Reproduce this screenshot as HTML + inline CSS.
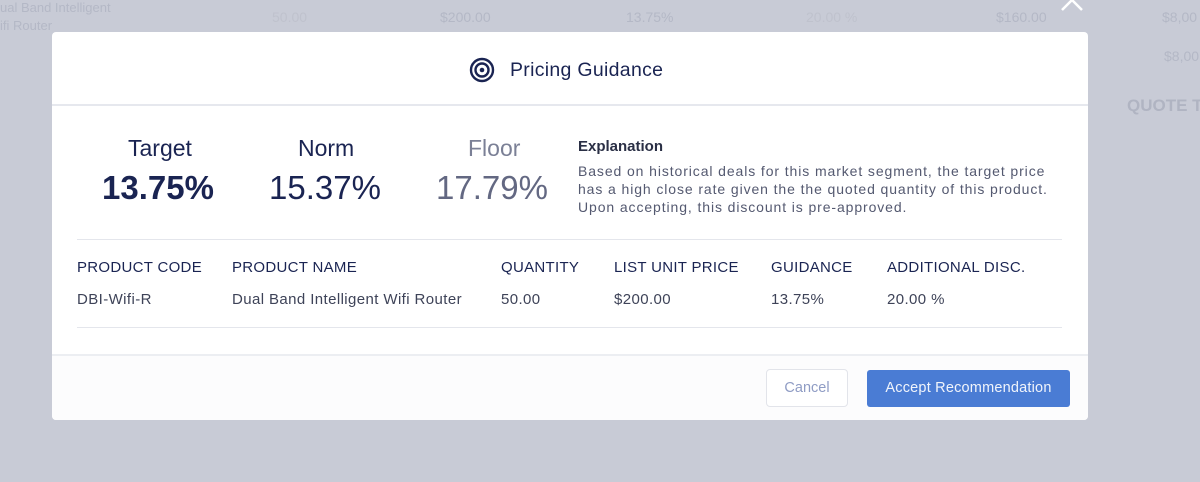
<!DOCTYPE html>
<html><head><meta charset="utf-8"><style>
*{margin:0;padding:0;box-sizing:border-box}
body{width:1200px;height:482px;background:#c8cbd6;font-family:"Liberation Sans",sans-serif;position:relative;overflow:hidden}
.a{position:absolute;white-space:nowrap}
.bg{color:#b4b8c6;font-size:14px}
.modal{position:absolute;left:52px;top:32px;width:1036px;height:388px;background:#fff;border-radius:4px;overflow:hidden}
.hd{color:#1a2452;font-size:15px;letter-spacing:0.3px}
.td{color:#3e4358;font-size:15px;letter-spacing:0.4px}
</style></head><body>
<div class="a bg" style="left:0;top:0;font-size:13px">ual Band Intelligent</div>
<div class="a bg" style="left:0;top:18px;font-size:13px">ifi Router</div>
<div class="a bg" style="left:272px;top:9px;color:#bfc2cd">50.00</div>
<div class="a bg" style="left:440px;top:9px">$200.00</div>
<div class="a bg" style="left:626px;top:9px">13.75%</div>
<div class="a bg" style="left:806px;top:9px;color:#bfc2cd">20.00 %</div>
<div class="a bg" style="left:996px;top:9px">$160.00</div>
<div class="a bg" style="left:1162px;top:9px">$8,00</div>
<div class="a bg" style="left:1164px;top:48px">$8,00</div>
<div class="a bg" style="left:1127px;top:96px;font-size:17px;font-weight:bold;color:#b0b4c2">QUOTE T</div>
<svg class="a" style="left:1060px;top:0" width="24" height="12"><path d="M2 10 L12 0 L22 10" stroke="#fff" stroke-width="2.5" fill="none"/></svg>
<div class="modal">
 <svg class="a" style="left:417px;top:25px" width="26" height="26" viewBox="0 0 26 26"><circle cx="13" cy="13" r="11" stroke="#1a2452" stroke-width="2.4" fill="none"/><circle cx="13" cy="13" r="6.5" stroke="#1a2452" stroke-width="2.4" fill="none"/><circle cx="13" cy="13" r="2.3" fill="#1a2452"/></svg>
 <div class="a" style="left:458px;top:27px;font-size:19.5px;letter-spacing:0.3px;color:#1a2452">Pricing Guidance</div>
 <div class="a" style="left:0;top:72px;width:1036px;height:2px;background:#e6e8ee"></div>
 <div class="a" style="left:76px;top:103px;font-size:23px;color:#1a2452">Target</div>
 <div class="a" style="left:50px;top:137px;font-size:33px;font-weight:bold;color:#1a2452">13.75%</div>
 <div class="a" style="left:246px;top:103px;font-size:23px;color:#1a2452">Norm</div>
 <div class="a" style="left:217px;top:137px;font-size:33px;color:#1a2452">15.37%</div>
 <div class="a" style="left:416px;top:103px;font-size:23px;color:#7b8096">Floor</div>
 <div class="a" style="left:384px;top:137px;font-size:33px;color:#636882">17.79%</div>
 <div class="a" style="left:526px;top:106px;font-size:15px;font-weight:bold;color:#2a2f45">Explanation</div>
 <div class="a" style="left:526px;top:130px;font-size:14px;letter-spacing:0.9px;line-height:18px;color:#545970">Based on historical deals for this market segment, the target price<br>has a high close rate given the the quoted quantity of this product.<br>Upon accepting, this discount is pre-approved.</div>
 <div class="a" style="left:25px;top:207px;width:985px;height:1px;background:#e4e6ec"></div>
 <div class="a hd" style="left:25px;top:227px">PRODUCT CODE</div>
 <div class="a hd" style="left:180px;top:227px">PRODUCT NAME</div>
 <div class="a hd" style="left:449px;top:227px">QUANTITY</div>
 <div class="a hd" style="left:562px;top:227px">LIST UNIT PRICE</div>
 <div class="a hd" style="left:719px;top:227px">GUIDANCE</div>
 <div class="a hd" style="left:835px;top:227px">ADDITIONAL DISC.</div>
 <div class="a td" style="left:25px;top:259px">DBI-Wifi-R</div>
 <div class="a td" style="left:180px;top:259px">Dual Band Intelligent Wifi Router</div>
 <div class="a td" style="left:449px;top:259px">50.00</div>
 <div class="a td" style="left:562px;top:259px">$200.00</div>
 <div class="a td" style="left:719px;top:259px">13.75%</div>
 <div class="a td" style="left:835px;top:259px">20.00 %</div>
 <div class="a" style="left:25px;top:295px;width:985px;height:1px;background:#e4e6ec"></div>
 <div class="a" style="left:0;top:322px;width:1036px;height:66px;background:#fcfcfd;border-top:2px solid #eceef2"></div>
 <div class="a" style="left:714px;top:337px;width:82px;height:38px;border:1px solid #e2e4ea;border-radius:4px;background:#fff;color:#8f9cc4;font-size:14.5px;text-align:center;line-height:36px">Cancel</div>
 <div class="a" style="left:815px;top:338px;width:203px;height:37px;border-radius:3px;background:#4a7cd4;color:#f0f4fb;font-size:14.5px;letter-spacing:0.2px;text-align:center;line-height:37px">Accept Recommendation</div>
</div>
</body></html>
